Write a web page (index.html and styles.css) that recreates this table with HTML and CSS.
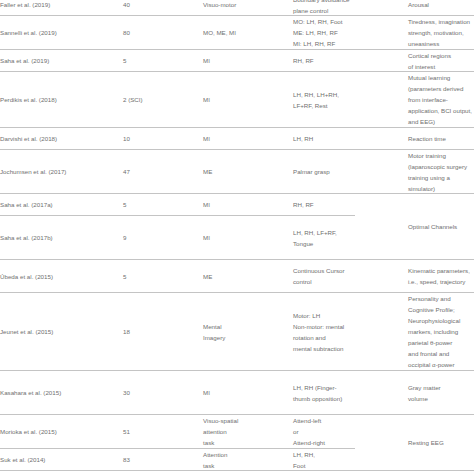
FILE: index.html
```html
<!DOCTYPE html>
<html>
<head>
<meta charset="utf-8">
<link rel="stylesheet" href="styles.css">
</head>
<body>
<div class="tbl">
  <div class="c c1">Faller et al. (2019)</div>
  <div class="c c2">40</div>
  <div class="c c3">Visuo-motor</div>
  <div class="c c4"><span>Boundary avoidance<br>plane control</span></div>
  <div class="c c5">Arousal</div>

  <div class="c c1">Sannelli et al. (2019)</div>
  <div class="c c2">80</div>
  <div class="c c3">MO, ME, MI</div>
  <div class="c c4"><span>MO: LH, RH, Foot<br>ME: LH, RH, RF<br>MI: LH, RH, RF</span></div>
  <div class="c c5"><span>Tiredness, imagination<br>strength, motivation,<br>uneasiness</span></div>

  <div class="c c1">Saha et al. (2019)</div>
  <div class="c c2">5</div>
  <div class="c c3">MI</div>
  <div class="c c4">RH, RF</div>
  <div class="c c5"><span>Cortical regions<br>of interest</span></div>

  <div class="c c1">Perdikis et al. (2018)</div>
  <div class="c c2">2 (SCI)</div>
  <div class="c c3">MI</div>
  <div class="c c4"><span>LH, RH, LH+RH,<br>LF+RF, Rest</span></div>
  <div class="c c5"><span>Mutual learning<br>(parameters derived<br>from interface-<br>application, BCI output,<br>and EEG)</span></div>

  <div class="c c1">Darvishi et al. (2018)</div>
  <div class="c c2">10</div>
  <div class="c c3">MI</div>
  <div class="c c4">LH, RH</div>
  <div class="c c5">Reaction time</div>

  <div class="c c1">Jochumsen et al. (2017)</div>
  <div class="c c2">47</div>
  <div class="c c3">ME</div>
  <div class="c c4">Palmar grasp</div>
  <div class="c c5"><span>Motor training<br>(laparoscopic surgery<br>training using a<br>simulator)</span></div>

  <div class="c c1">Saha et al. (2017a)</div>
  <div class="c c2">5</div>
  <div class="c c3">MI</div>
  <div class="c c4">RH, RF</div>
  <div class="c c5 span2">Optimal Channels</div>

  <div class="c c1">Saha et al. (2017b)</div>
  <div class="c c2">9</div>
  <div class="c c3">MI</div>
  <div class="c c4"><span>LH, RH, LF+RF,<br>Tongue</span></div>

  <div class="c c1">Úbeda et al. (2015)</div>
  <div class="c c2">5</div>
  <div class="c c3">ME</div>
  <div class="c c4"><span>Continuous Cursor<br>control</span></div>
  <div class="c c5"><span>Kinematic parameters,<br>i.e., speed, trajectory</span></div>

  <div class="c c1">Jeunet et al. (2015)</div>
  <div class="c c2">18</div>
  <div class="c c3"><span>Mental<br>Imagery</span></div>
  <div class="c c4"><span>Motor: LH<br>Non-motor: mental<br>rotation and<br>mental subtraction</span></div>
  <div class="c c5"><span>Personality and<br>Cognitive Profile;<br>Neurophysiological<br>markers, including<br>parietal θ-power<br>and frontal and<br>occipital α-power</span></div>

  <div class="c c1">Kasahara et al. (2015)</div>
  <div class="c c2">30</div>
  <div class="c c3">MI</div>
  <div class="c c4"><span>LH, RH (Finger-<br>thumb opposition)</span></div>
  <div class="c c5"><span>Gray matter<br>volume</span></div>

  <div class="c c1">Morioka et al. (2015)</div>
  <div class="c c2">51</div>
  <div class="c c3"><span>Visuo-spatial<br>attention<br>task</span></div>
  <div class="c c4"><span>Attend-left<br>or<br>Attend-right</span></div>
  <div class="c c5 span2">Resting EEG</div>

  <div class="c c1">Suk et al. (2014)</div>
  <div class="c c2">83</div>
  <div class="c c3"><span>Attention<br>task</span></div>
  <div class="c c4"><span>LH, RH,<br>Foot</span></div>
</div>
</body>
</html>
```

FILE: styles.css
```css
html, body {
  margin: 0;
  padding: 0;
  background: #ffffff;
  overflow: hidden;
}

.tbl {
  display: grid;
  grid-template-columns: 123px 80px 90px 62px 119px;
  grid-template-rows: 22px 34px 22px 56px 22px 44px 22px 44px 33px 78px 44px 34px 22px;
  margin-top: -6px;
  width: 474px;
  font-family: "Liberation Sans", Arial, sans-serif;
  font-size: 6.2px;
  line-height: 11px;
  color: #707070;
}

.c {
  box-sizing: border-box;
  border-bottom: 1px solid #c4c4c4;
  display: flex;
  align-items: center;
  white-space: nowrap;
}

.c1 { padding-left: 0; }
.c2 { padding-left: 0; }
.c3 { padding-left: 0; }
.c4 { padding-left: 0; }
.c5 { padding-left: 53px; }

.span2 { grid-row: span 2; }
```
